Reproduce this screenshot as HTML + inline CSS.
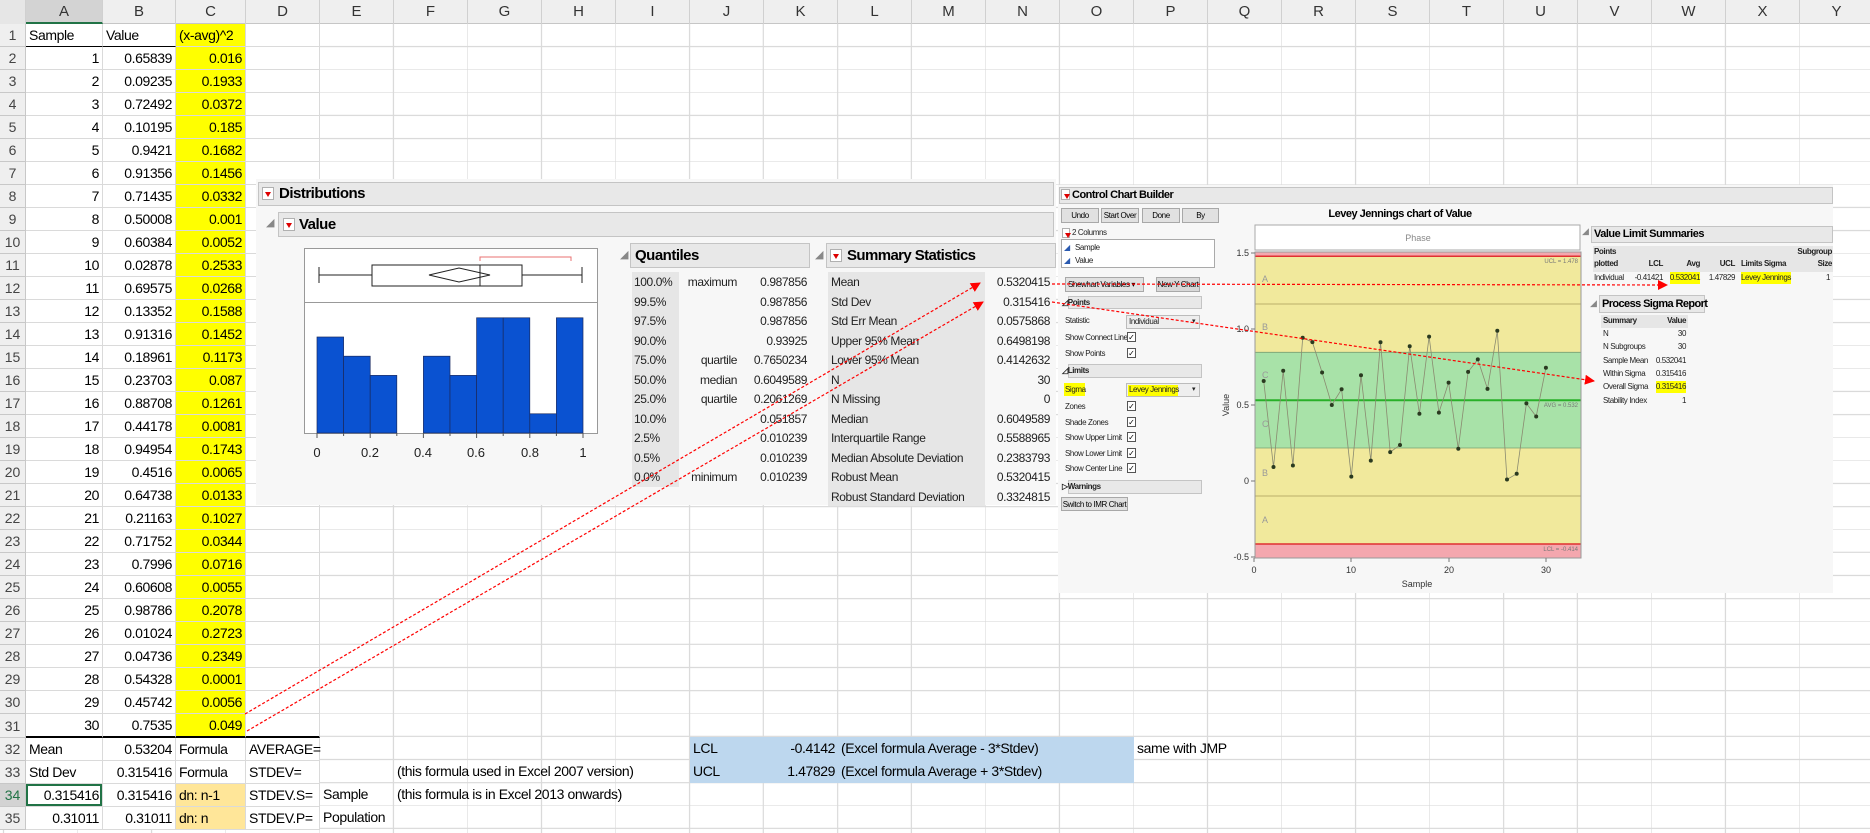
<!DOCTYPE html>
<html><head><meta charset="utf-8"><style>
*{margin:0;padding:0;box-sizing:border-box}
body{width:1870px;height:833px;overflow:hidden;position:relative;font-family:"Liberation Sans",sans-serif;background:#fff;
background-image:repeating-linear-gradient(to right,transparent 0 73px,#dadada 73px 74px),repeating-linear-gradient(to bottom,transparent 0 22px,#dadada 22px 23px);
background-position:246px 0,0 24px}
#hdr{position:absolute;left:0;top:0;width:1870px;height:24px;background:#efefef;border-bottom:1px solid #c6c6c6}
#hdr span{position:absolute;top:0;width:74px;text-align:center;font:15px/24px "Liberation Sans",sans-serif;color:#333;border-right:1px solid #d0d0d0;height:24px}
table{position:absolute;left:0;top:24px;border-collapse:separate;border-spacing:0;table-layout:fixed;width:320px;font-size:14px;letter-spacing:-0.4px;background:#fff}
td,th{height:23px;padding:0 3px;border-right:1px solid #dadada;border-bottom:1px solid #dadada;white-space:nowrap;line-height:22px;font-weight:normal;overflow:visible}
th{background:#efefef;color:#444;font-size:14px;text-align:center;padding:0;border-color:#c8c8c8;letter-spacing:0}
.r{text-align:right}.y{background:#ffff00}.o{background:#ffe699}.bb{border-bottom:1px solid #000}.tb{border-bottom:2px solid #000}
.sel{box-shadow:inset 0 0 0 2px #217346}
.t{position:absolute;white-space:nowrap;font-size:14px;letter-spacing:-0.4px;line-height:22px}
.p{position:absolute}
.bar{position:absolute;background:#e8e8e8;border:1px solid #c4c4c4}
.q{position:absolute;white-space:nowrap;font:12px/16px "Liberation Sans",sans-serif;letter-spacing:-0.4px;color:#222}
.s{position:absolute;white-space:nowrap;font:8px/12px "Liberation Sans",sans-serif;letter-spacing:-0.4px;color:#222}
.ic{position:absolute;width:12px;height:13px;background:#fff;border:1px solid #b0b0b0}
.ic:after{content:"";position:absolute;left:2px;top:4px;border-left:3px solid transparent;border-right:3px solid transparent;border-top:5px solid #d00}
.btn{position:absolute;background:#e1e1e1;border:1px solid #a8a8a8;font:8px/13px "Liberation Sans",sans-serif;text-align:center;letter-spacing:-0.4px;white-space:nowrap;overflow:hidden}
.cb{position:absolute;width:9px;height:10px;border:1px solid #555;background:#fff;font:8px/9px "DejaVu Sans",sans-serif;text-align:center}
</style></head><body>
<div id="hdr">
<span style="left:0;width:26px;background:#e6e6e6"></span>
<span style="left:26px;width:77px;background:#d3d3d3;border-bottom:2px solid #217346">A</span>
<span style="left:103px;width:73px">B</span><span style="left:176px;width:70px">C</span>
<span style="left:246px">D</span><span style="left:320px">E</span><span style="left:394px">F</span><span style="left:468px">G</span><span style="left:542px">H</span><span style="left:616px">I</span><span style="left:690px">J</span><span style="left:764px">K</span><span style="left:838px">L</span><span style="left:912px">M</span><span style="left:986px">N</span><span style="left:1060px">O</span><span style="left:1134px">P</span><span style="left:1208px">Q</span><span style="left:1282px">R</span><span style="left:1356px">S</span><span style="left:1430px">T</span><span style="left:1504px">U</span><span style="left:1578px">V</span><span style="left:1652px">W</span><span style="left:1726px">X</span><span style="left:1800px">Y</span>
</div>
<table><colgroup><col style="width:26px"><col style="width:77px"><col style="width:73px"><col style="width:70px"><col style="width:74px"></colgroup>
<tr><th>1<td class=bb>Sample<td class=bb>Value<td class=y>(x-avg)^2<td>
<tr><th>2<td class=r>1<td class=r>0.65839<td class="r y">0.016<td>
<tr><th>3<td class=r>2<td class=r>0.09235<td class="r y">0.1933<td>
<tr><th>4<td class=r>3<td class=r>0.72492<td class="r y">0.0372<td>
<tr><th>5<td class=r>4<td class=r>0.10195<td class="r y">0.185<td>
<tr><th>6<td class=r>5<td class=r>0.9421<td class="r y">0.1682<td>
<tr><th>7<td class=r>6<td class=r>0.91356<td class="r y">0.1456<td>
<tr><th>8<td class=r>7<td class=r>0.71435<td class="r y">0.0332<td>
<tr><th>9<td class=r>8<td class=r>0.50008<td class="r y">0.001<td>
<tr><th>10<td class=r>9<td class=r>0.60384<td class="r y">0.0052<td>
<tr><th>11<td class=r>10<td class=r>0.02878<td class="r y">0.2533<td>
<tr><th>12<td class=r>11<td class=r>0.69575<td class="r y">0.0268<td>
<tr><th>13<td class=r>12<td class=r>0.13352<td class="r y">0.1588<td>
<tr><th>14<td class=r>13<td class=r>0.91316<td class="r y">0.1452<td>
<tr><th>15<td class=r>14<td class=r>0.18961<td class="r y">0.1173<td>
<tr><th>16<td class=r>15<td class=r>0.23703<td class="r y">0.087<td>
<tr><th>17<td class=r>16<td class=r>0.88708<td class="r y">0.1261<td>
<tr><th>18<td class=r>17<td class=r>0.44178<td class="r y">0.0081<td>
<tr><th>19<td class=r>18<td class=r>0.94954<td class="r y">0.1743<td>
<tr><th>20<td class=r>19<td class=r>0.4516<td class="r y">0.0065<td>
<tr><th>21<td class=r>20<td class=r>0.64738<td class="r y">0.0133<td>
<tr><th>22<td class=r>21<td class=r>0.21163<td class="r y">0.1027<td>
<tr><th>23<td class=r>22<td class=r>0.71752<td class="r y">0.0344<td>
<tr><th>24<td class=r>23<td class=r>0.7996<td class="r y">0.0716<td>
<tr><th>25<td class=r>24<td class=r>0.60608<td class="r y">0.0055<td>
<tr><th>26<td class=r>25<td class=r>0.98786<td class="r y">0.2078<td>
<tr><th>27<td class=r>26<td class=r>0.01024<td class="r y">0.2723<td>
<tr><th>28<td class=r>27<td class=r>0.04736<td class="r y">0.2349<td>
<tr><th>29<td class=r>28<td class=r>0.54328<td class="r y">0.0001<td>
<tr><th>30<td class=r>29<td class=r>0.45742<td class="r y">0.0056<td>
<tr><th>31<td class="r tb">30<td class="r tb">0.7535<td class="r y tb">0.049<td class=tb>
<tr><th>32<td>Mean<td class=r>0.53204<td>Formula<td>AVERAGE=
<tr><th>33<td>Std Dev<td class=r>0.315416<td>Formula<td>STDEV=
<tr><th style="color:#217346;background:#d3d3d3">34<td class="r sel">0.315416<td class=r>0.315416<td class=o>dn: n-1<td>STDEV.S=
<tr><th>35<td class=r>0.31011<td class=r>0.31011<td class=o>dn: n<td>STDEV.P=
</table>
<div class=p style="left:690px;top:737px;width:444px;height:46px;background:#bdd7ee"></div>
<div class=t style="left:693px;top:737px">LCL</div>
<div class=t style="right:1035px;top:737px">-0.4142</div>
<div class=t style="left:841px;top:737px">(Excel formula Average - 3*Stdev)</div>
<div class=t style="left:1137px;top:737px">same with JMP</div>
<div class=t style="left:693px;top:760px">UCL</div>
<div class=t style="right:1035px;top:760px">1.47829</div>
<div class=t style="left:841px;top:760px">(Excel formula Average + 3*Stdev)</div>
<div class=t style="left:397px;top:760px">(this formula used in Excel 2007 version)</div>
<div class=t style="left:323px;top:783px">Sample</div>
<div class=t style="left:397px;top:783px">(this formula is in Excel 2013 onwards)</div>
<div class=t style="left:323px;top:806px">Population</div>

<!-- Distributions -->
<div class=p style="left:256px;top:179px;width:800px;height:326px;background:#f7f7f7"></div>
<div class=bar style="left:258px;top:182px;width:796px;height:24px"></div>
<div class=ic style="left:262px;top:187px"></div>
<div class=p style="left:279px;top:183px;font:bold 15px/22px 'Liberation Sans',sans-serif;letter-spacing:-0.5px">Distributions</div>
<div class=p style="left:266px;top:216px;color:#888;font-size:11px">◢</div>
<div class=bar style="left:278px;top:212px;width:776px;height:25px"></div>
<div class=ic style="left:283px;top:218px"></div>
<div class=p style="left:299px;top:214px;font:bold 15px/22px 'Liberation Sans',sans-serif;letter-spacing:-0.5px">Value</div>
<div class=p style="left:304px;top:248px;width:294px;height:186px;background:#fff;border:1px solid #999"></div>
<div class=p style="left:304px;top:302px;width:294px;height:1px;background:#999"></div>
<div class=p style="left:620px;top:248px;color:#888;font-size:11px">◢</div>
<div class=bar style="left:630px;top:243px;width:180px;height:25px"></div>
<div class=p style="left:635px;top:245px;font:bold 15px/22px 'Liberation Sans',sans-serif;letter-spacing:-0.5px">Quantiles</div>
<div class=p style="left:815px;top:248px;color:#888;font-size:11px">◢</div>
<div class=bar style="left:826px;top:243px;width:230px;height:25px"></div>
<div class=ic style="left:830px;top:249px"></div>
<div class=p style="left:847px;top:245px;font:bold 15px/22px 'Liberation Sans',sans-serif;letter-spacing:-0.6px">Summary Statistics</div>
<div class=p style="left:632px;top:272px;width:47px;height:215px;background:#e6e6e6"></div>
<div class=p style="left:828px;top:272px;width:157px;height:234px;background:#e6e6e6"></div>
<div class=q style="left:634px;top:274px">100.0%</div><div class=q style="right:1133px;top:274px">maximum</div><div class=q style="right:1063px;top:274px">0.987856</div>
<div class=q style="left:634px;top:293.5px">99.5%</div><div class=q style="right:1063px;top:293.5px">0.987856</div>
<div class=q style="left:634px;top:313px">97.5%</div><div class=q style="right:1063px;top:313px">0.987856</div>
<div class=q style="left:634px;top:332.5px">90.0%</div><div class=q style="right:1063px;top:332.5px">0.93925</div>
<div class=q style="left:634px;top:352px">75.0%</div><div class=q style="right:1133px;top:352px">quartile</div><div class=q style="right:1063px;top:352px">0.7650234</div>
<div class=q style="left:634px;top:371.5px">50.0%</div><div class=q style="right:1133px;top:371.5px">median</div><div class=q style="right:1063px;top:371.5px">0.6049589</div>
<div class=q style="left:634px;top:391px">25.0%</div><div class=q style="right:1133px;top:391px">quartile</div><div class=q style="right:1063px;top:391px">0.2061269</div>
<div class=q style="left:634px;top:410.5px">10.0%</div><div class=q style="right:1063px;top:410.5px">0.051857</div>
<div class=q style="left:634px;top:430px">2.5%</div><div class=q style="right:1063px;top:430px">0.010239</div>
<div class=q style="left:634px;top:449.5px">0.5%</div><div class=q style="right:1063px;top:449.5px">0.010239</div>
<div class=q style="left:634px;top:469px">0.0%</div><div class=q style="right:1133px;top:469px">minimum</div><div class=q style="right:1063px;top:469px">0.010239</div>
<div class=q style="left:831px;top:274px">Mean</div><div class=q style="right:820px;top:274px">0.5320415</div>
<div class=q style="left:831px;top:293.5px">Std Dev</div><div class=q style="right:820px;top:293.5px">0.315416</div>
<div class=q style="left:831px;top:313px">Std Err Mean</div><div class=q style="right:820px;top:313px">0.0575868</div>
<div class=q style="left:831px;top:332.5px">Upper 95% Mean</div><div class=q style="right:820px;top:332.5px">0.6498198</div>
<div class=q style="left:831px;top:352px">Lower 95% Mean</div><div class=q style="right:820px;top:352px">0.4142632</div>
<div class=q style="left:831px;top:371.5px">N</div><div class=q style="right:820px;top:371.5px">30</div>
<div class=q style="left:831px;top:391px">N Missing</div><div class=q style="right:820px;top:391px">0</div>
<div class=q style="left:831px;top:410.5px">Median</div><div class=q style="right:820px;top:410.5px">0.6049589</div>
<div class=q style="left:831px;top:430px">Interquartile Range</div><div class=q style="right:820px;top:430px">0.5588965</div>
<div class=q style="left:831px;top:449.5px">Median Absolute Deviation</div><div class=q style="right:820px;top:449.5px">0.2383793</div>
<div class=q style="left:831px;top:469px">Robust Mean</div><div class=q style="right:820px;top:469px">0.5320415</div>
<div class=q style="left:831px;top:488.5px">Robust Standard Deviation</div><div class=q style="right:820px;top:488.5px">0.3324815</div>

<!-- Control chart builder -->
<div class=p style="left:1058px;top:185px;width:775px;height:408px;background:#f7f7f7"></div>
<div class=bar style="left:1059px;top:187px;width:774px;height:17px"></div>
<div class=ic style="left:1061px;top:189px;width:9px;height:11px"></div>
<div class=p style="left:1072px;top:188px;font:bold 11px/15px 'Liberation Sans',sans-serif;letter-spacing:-0.5px">Control Chart Builder</div>
<div class=btn style="left:1061px;top:208px;width:38px;height:15px">Undo</div>
<div class=btn style="left:1101px;top:208px;width:38px;height:15px">Start Over</div>
<div class=btn style="left:1142px;top:208px;width:38px;height:15px">Done</div>
<div class=btn style="left:1182px;top:208px;width:37px;height:15px">By</div>
<div class=ic style="left:1062px;top:228px;width:8px;height:10px"></div>
<div class=s style="left:1072px;top:227px">2 Columns</div>
<div class=p style="left:1061px;top:239px;width:154px;height:29px;background:#fff;border:1px solid #aaa"></div>
<div class=s style="left:1064px;top:242px;color:#2a5ab0">◢</div><div class=s style="left:1075px;top:242px">Sample</div>
<div class=s style="left:1064px;top:255px;color:#2a5ab0">◢</div><div class=s style="left:1075px;top:255px">Value</div>
<div class=btn style="left:1065px;top:277px;width:79px;height:15px;text-align:left;padding-left:2px">Shewhart Variables ▾</div>
<div class=btn style="left:1156px;top:277px;width:44px;height:15px;background:#d8d8d8">New Y Chart</div>
<div class=bar style="left:1068px;top:296px;width:134px;height:13px"></div>
<div class=s style="left:1062px;top:297px;font-weight:bold">◿Points</div>
<div class=s style="left:1065px;top:315px">Statistic</div>
<div class=p style="left:1126px;top:315px;width:74px;height:14px;background:#eee;border:1px solid #bbb"></div>
<div class=s style="left:1129px;top:316px">Individual</div><div class=s style="left:1192px;top:316px;font-size:7px">▾</div>
<div class=s style="left:1065px;top:332px">Show Connect Line</div><div class=cb style="left:1127px;top:332px">✓</div>
<div class=s style="left:1065px;top:348px">Show Points</div><div class=cb style="left:1127px;top:348px">✓</div>
<div class=bar style="left:1068px;top:364px;width:134px;height:14px"></div>
<div class=s style="left:1062px;top:365px;font-weight:bold">◿Limits</div>
<div class=p style="left:1064px;top:383px;width:21px;height:13px;background:#ffff00"></div>
<div class=s style="left:1065px;top:384px">Sigma</div>
<div class=p style="left:1126px;top:383px;width:74px;height:14px;background:#eee;border:1px solid #bbb"></div>
<div class=p style="left:1128px;top:385px;width:50px;height:11px;background:#ffff00"></div>
<div class=s style="left:1129px;top:384px">Levey Jennings</div><div class=s style="left:1192px;top:384px;font-size:7px">▾</div>
<div class=s style="left:1065px;top:401px">Zones</div><div class=cb style="left:1127px;top:401px">✓</div>
<div class=s style="left:1065px;top:417px">Shade Zones</div><div class=cb style="left:1127px;top:417px">✓</div>
<div class=s style="left:1065px;top:432px">Show Upper Limit</div><div class=cb style="left:1127px;top:432px">✓</div>
<div class=s style="left:1065px;top:448px">Show Lower Limit</div><div class=cb style="left:1127px;top:448px">✓</div>
<div class=s style="left:1065px;top:463px">Show Center Line</div><div class=cb style="left:1127px;top:463px">✓</div>
<div class=bar style="left:1068px;top:480px;width:134px;height:14px"></div>
<div class=s style="left:1062px;top:481px;font-weight:bold">▷Warnings</div>
<div class=btn style="left:1061px;top:497px;width:67px;height:14px">Switch to IMR Chart</div>
<div class=p style="left:1300px;top:207px;width:200px;text-align:center;font:bold 11px/14px 'Liberation Sans',sans-serif;letter-spacing:-0.5px">Levey Jennings chart of Value</div>

<div class=p style="left:1582px;top:226px;color:#888;font-size:9px">◢</div>
<div class=bar style="left:1591px;top:226px;width:242px;height:17px"></div>
<div class=p style="left:1594px;top:227px;font:bold 11px/15px 'Liberation Sans',sans-serif;letter-spacing:-0.5px">Value Limit Summaries</div>
<div class=p style="left:1593px;top:246px;width:240px;height:26px;background:#e6e6e6"></div>
<div class=s style="left:1594px;top:246px;font-weight:bold">Points</div>
<div class=s style="left:1594px;top:258px;font-weight:bold">plotted</div>
<div class=s style="right:207px;top:258px;font-weight:bold">LCL</div>
<div class=s style="right:170px;top:258px;font-weight:bold">Avg</div>
<div class=s style="right:135px;top:258px;font-weight:bold">UCL</div>
<div class=s style="left:1741px;top:258px;font-weight:bold">Limits Sigma</div>
<div class=s style="right:38px;top:246px;font-weight:bold">Subgroup</div>
<div class=s style="right:38px;top:258px;font-weight:bold">Size</div>
<div class=s style="left:1594px;top:272px">Individual</div>
<div class=s style="right:207px;top:272px">-0.41421</div>
<div class=s style="right:170px;top:272px;background:#ffff00">0.532041</div>
<div class=s style="right:135px;top:272px">1.47829</div>
<div class=s style="left:1741px;top:272px;background:#ffff00">Levey Jennings</div>
<div class=s style="right:40px;top:272px">1</div>
<div class=p style="left:1590px;top:298px;color:#888;font-size:9px">◢</div>
<div class=bar style="left:1599px;top:295px;width:106px;height:18px"></div>
<div class=p style="left:1602px;top:297px;font:bold 11px/15px 'Liberation Sans',sans-serif;letter-spacing:-0.6px">Process Sigma Report</div>
<div class=p style="left:1601px;top:315px;width:87px;height:13px;background:#e6e6e6"></div>
<div class=s style="left:1603px;top:315px;font-weight:bold">Summary</div>
<div class=s style="right:184px;top:315px;font-weight:bold">Value</div>
<div class=s style="left:1603px;top:328px">N</div><div class=s style="right:184px;top:328px">30</div>
<div class=s style="left:1603px;top:341px">N Subgroups</div><div class=s style="right:184px;top:341px">30</div>
<div class=s style="left:1603px;top:355px">Sample Mean</div><div class=s style="right:184px;top:355px">0.532041</div>
<div class=s style="left:1603px;top:368px">Within Sigma</div><div class=s style="right:184px;top:368px">0.315416</div>
<div class=s style="left:1603px;top:381px">Overall Sigma</div><div class=s style="right:184px;top:381px;background:#ffff00">0.315416</div>
<div class=s style="left:1603px;top:395px">Stability Index</div><div class=s style="right:184px;top:395px">1</div>

<svg class=p style="left:0;top:0" width="1870" height="833" viewBox="0 0 1870 833">
<defs><marker id="ah" markerWidth="10" markerHeight="10" refX="9" refY="5" orient="auto" markerUnits="userSpaceOnUse"><path d="M0,0 L10,5 L0,10 z" fill="#f00"/></marker></defs>
<g fill="#0a52d1" stroke="#1a2a60" stroke-width="0.7">
<rect x="317" y="337" width="26.6" height="96"/><rect x="343.6" y="356.2" width="26.6" height="76.8"/><rect x="370.2" y="375.4" width="26.6" height="57.6"/>
<rect x="423.4" y="356.2" width="26.6" height="76.8"/><rect x="450" y="375.4" width="26.6" height="57.6"/><rect x="476.6" y="317.8" width="26.6" height="115.2"/>
<rect x="503.2" y="317.8" width="26.6" height="115.2"/><rect x="529.8" y="413.8" width="26.6" height="19.2"/><rect x="556.4" y="317.8" width="26.6" height="115.2"/></g>
<g stroke="#555" stroke-width="1"><path d="M317 433v5M343.6 433v3M370.2 433v5M396.8 433v3M423.4 433v5M450 433v3M476.6 433v5M503.2 433v3M529.8 433v5M556.4 433v3M583 433v5"/></g>
<g font-family="Liberation Sans" font-size="13" fill="#222" text-anchor="middle"><text x="317" y="457">0</text><text x="370" y="457">0.2</text><text x="423" y="457">0.4</text><text x="476" y="457">0.6</text><text x="530" y="457">0.8</text><text x="583" y="457">1</text></g>
<g stroke="#222" stroke-width="1" fill="none"><path d="M319 275H372M522 275H582M319 267V283M582 267V283M480 265V286"/><rect x="372" y="265" width="150" height="21"/><path d="M429 275L459 268L490 275L459 282Z"/></g>
<path d="M480 261V257H571V261" stroke="#e87070" fill="none"/>
<rect x="1255" y="225" width="325" height="25" fill="#fff" stroke="#aaa"/>
<text x="1418" y="241" font-family="Liberation Sans" font-size="9" fill="#888" text-anchor="middle">Phase</text>
<rect x="1255" y="252" width="326" height="306" fill="#fff"/>
<rect x="1255" y="252" width="326" height="4.3" fill="#f4a7ae"/>
<rect x="1255" y="256.3" width="326" height="96" fill="#f1e99c"/>
<rect x="1255" y="352.3" width="326" height="95.7" fill="#a8e2a8"/>
<rect x="1255" y="448" width="326" height="96" fill="#f1e99c"/>
<rect x="1255" y="544" width="326" height="14" fill="#f4a7ae"/>
<g stroke-width="0.8"><path d="M1255 304H1581M1255 496H1581" stroke="#a89a5a"/><path d="M1255 352.3H1581M1255 448H1581" stroke="#7aa070"/></g>
<path d="M1255 256.3H1581M1255 544H1581" stroke="#e03030" stroke-width="1.5"/>
<path d="M1255 400.2H1581" stroke="#28b028" stroke-width="2"/>
<rect x="1255" y="252" width="326" height="306" fill="none" stroke="#999"/>
<g font-family="Liberation Sans" font-size="9" fill="#999"><text x="1262" y="282">A</text><text x="1262" y="330">B</text><text x="1262" y="378">C</text><text x="1262" y="427">C</text><text x="1262" y="476">B</text><text x="1262" y="523">A</text></g>
<g font-family="Liberation Sans" font-size="6" fill="#777" text-anchor="end"><text x="1578" y="263">UCL = 1.478</text><text x="1578" y="407">AVG = 0.532</text><text x="1578" y="551">LCL = -0.414</text></g>
<polyline fill="none" stroke="#8a8a70" stroke-width="0.8" points="1263.7,381 1273.5,467 1283.2,370.8 1292.9,465.5 1302.7,337.8 1312.4,342.1 1322.1,372.5 1331.8,405 1341.6,389.2 1351.3,476.6 1361,375.2 1370.8,460.6 1380.5,342.2 1390.2,452.1 1400,445 1409.7,346.2 1419.4,413.8 1429.1,336.6 1438.9,412.6 1448.6,382.6 1458.3,448.8 1468.1,371.9 1477.8,359.4 1487.5,388.9 1497.3,330.8 1507,479.5 1516.7,473.8 1526.4,403.4 1536.2,416.5 1545.9,367.7"/>
<g fill="#2a3a20"><circle cx="1263.7" cy="381" r="2"/><circle cx="1273.5" cy="467" r="2"/><circle cx="1283.2" cy="370.8" r="2"/><circle cx="1292.9" cy="465.5" r="2"/><circle cx="1302.7" cy="337.8" r="2"/><circle cx="1312.4" cy="342.1" r="2"/><circle cx="1322.1" cy="372.5" r="2"/><circle cx="1331.8" cy="405" r="2"/><circle cx="1341.6" cy="389.2" r="2"/><circle cx="1351.3" cy="476.6" r="2"/><circle cx="1361" cy="375.2" r="2"/><circle cx="1370.8" cy="460.6" r="2"/><circle cx="1380.5" cy="342.2" r="2"/><circle cx="1390.2" cy="452.1" r="2"/><circle cx="1400" cy="445" r="2"/><circle cx="1409.7" cy="346.2" r="2"/><circle cx="1419.4" cy="413.8" r="2"/><circle cx="1429.1" cy="336.6" r="2"/><circle cx="1438.9" cy="412.6" r="2"/><circle cx="1448.6" cy="382.6" r="2"/><circle cx="1458.3" cy="448.8" r="2"/><circle cx="1468.1" cy="371.9" r="2"/><circle cx="1477.8" cy="359.4" r="2"/><circle cx="1487.5" cy="388.9" r="2"/><circle cx="1497.3" cy="330.8" r="2"/><circle cx="1507" cy="479.5" r="2"/><circle cx="1516.7" cy="473.8" r="2"/><circle cx="1526.4" cy="403.4" r="2"/><circle cx="1536.2" cy="416.5" r="2"/><circle cx="1545.9" cy="367.7" r="2"/></g>
<g stroke="#777"><path d="M1251 253H1255M1251 329H1255M1251 405H1255M1251 481H1255M1251 557H1255M1254 558V562M1351 558V562M1449 558V562M1546 558V562"/></g>
<g font-family="Liberation Sans" font-size="9" fill="#333"><g text-anchor="end"><text x="1249" y="256">1.5</text><text x="1249" y="332">1.0</text><text x="1249" y="408">0.5</text><text x="1249" y="484">0</text><text x="1249" y="560">-0.5</text></g>
<g text-anchor="middle"><text x="1254" y="573">0</text><text x="1351" y="573">10</text><text x="1449" y="573">20</text><text x="1546" y="573">30</text><text x="1417" y="587">Sample</text><text transform="translate(1229,405) rotate(-90)">Value</text></g></g>
<g stroke="#f00" stroke-width="1.2" stroke-dasharray="3,2" fill="none" marker-end="url(#ah)">
<path d="M245 714L980 283"/><path d="M247 731L983 302"/><path d="M1052 284L1667 285"/><path d="M1052 302L1594 381"/></g>
</svg>
</body></html>
